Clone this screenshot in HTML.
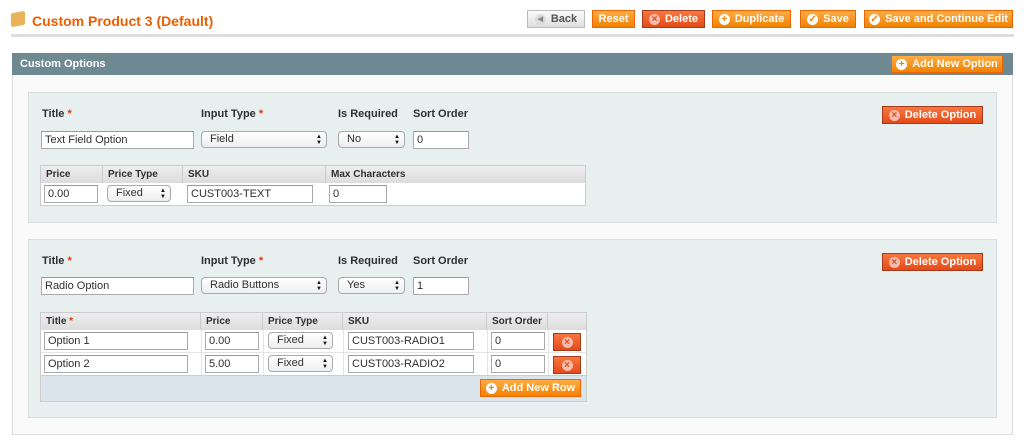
<!DOCTYPE html>
<html><head><style>
*{margin:0;padding:0;box-sizing:border-box}
body{width:1024px;height:445px;background:#fff;font-family:"Liberation Sans",Arial,sans-serif;font-size:11px;color:#2f2f2f;position:relative;overflow:hidden}
.a{position:absolute}
.btn{position:absolute;height:18px;border:1px solid #ed6502;background:linear-gradient(#ffac47,#f18200);color:#fff;font-weight:bold;font-size:11px;white-space:nowrap;display:flex;align-items:center;justify-content:center}
.red{border-color:#a43a1b;background:linear-gradient(#f8773f,#e44b19)}
.gray{border-color:#bbb;background:linear-gradient(#fbfbfb,#dedede);color:#555}
.ic{display:inline-block;width:11px;height:11px;border-radius:50%;background:#fff;margin-right:5px;color:#f18200;font-size:10px;line-height:11px;text-align:center;flex:none}
.red .ic{background:#f4bcae;color:#e44b19}
.lbl{position:absolute;font-weight:bold;font-size:11px;color:#2f2f2f}
.req{color:#eb340a}
.in{position:absolute;height:18px;border:1px solid #aaa;border-top-color:#999;background:#fff;font-size:11px;line-height:16px;padding-left:3px}
.sel{position:absolute;height:17px;border:1px solid #aaa;border-radius:4px;background:linear-gradient(#fff,#eee);font-size:11px;line-height:15px;padding-left:8px}
.sel:after{content:"\25B2\A\25BC";white-space:pre;position:absolute;right:4px;top:2px;font-size:6px;line-height:6px;color:#111}
.box{position:absolute;background:#e7efef;border:1px solid #d6e0e0}
.th{position:absolute;background:linear-gradient(#eee,#ddd);border-right:1px solid #ccc;font-weight:bold;font-size:10px;padding-left:5px;line-height:17px;height:17px}
</style></head><body>
<div class="a" style="left:11px;top:12px;width:14px;height:14px;background:#e9b35a;border-radius:2px;transform:skewY(-10deg)"></div>
<div class="a" style="left:32px;top:13px;font-size:14px;font-weight:bold;color:#eb5e00">Custom Product 3 (Default)</div>
<div class="a" style="left:11px;top:34px;width:1003px;height:3px;background:#ddd"></div>

<div class="btn gray" style="left:527px;top:10px;width:58px"><span class="ic" style="background:#ddd;color:#888;font-size:7px">&#9664;</span>Back</div>
<div class="btn" style="left:592px;top:10px;width:43px">Reset</div>
<div class="btn red" style="left:642px;top:10px;width:63px"><span class="ic">×</span>Delete</div>
<div class="btn" style="left:712px;top:10px;width:79px"><span class="ic">+</span>Duplicate</div>
<div class="btn" style="left:800px;top:10px;width:56px"><span class="ic">✓</span>Save</div>
<div class="btn" style="left:864px;top:10px;width:149px"><span class="ic">✓</span>Save and Continue Edit</div>

<div class="a" style="left:12px;top:53px;width:1001px;height:382px;background:#fafafa;border:1px solid #ddd"></div>
<div class="a" style="left:12px;top:53px;width:1001px;height:22px;background:#6f8992;color:#fff;font-weight:bold;font-size:11px;padding:5px 0 0 8px">Custom Options</div>
<div class="btn" style="left:891px;top:55px;width:112px"><span class="ic">+</span>Add New Option</div>

<div class="box" style="left:28px;top:92px;width:969px;height:131px"></div>
<div class="lbl" style="left:42px;top:108px">Title <span class="req">*</span></div>
<div class="lbl" style="left:201px;top:108px">Input Type <span class="req">*</span></div>
<div class="lbl" style="left:338px;top:108px">Is Required</div>
<div class="lbl" style="left:413px;top:108px">Sort Order</div>
<div class="in" style="left:41px;top:131px;width:153px">Text Field Option</div>
<div class="sel" style="left:201px;top:131px;width:126px">Field</div>
<div class="sel" style="left:338px;top:131px;width:67px">No</div>
<div class="in" style="left:413px;top:131px;width:56px">0</div>
<div class="btn red" style="left:882px;top:106px;width:101px"><span class="ic">×</span>Delete Option</div>
<div class="a" style="left:40px;top:165px;width:546px;height:41px;border:1px solid #ccc;background:#fff"></div>
<div class="th" style="left:41px;top:166px;width:62px">Price</div>
<div class="th" style="left:103px;top:166px;width:80px">Price Type</div>
<div class="th" style="left:183px;top:166px;width:143px">SKU</div>
<div class="th" style="left:326px;top:166px;width:259px;border:0">Max Characters</div>
<div class="in" style="left:44px;top:185px;width:54px">0.00</div>
<div class="sel" style="left:107px;top:185px;width:64px">Fixed</div>
<div class="in" style="left:187px;top:185px;width:126px">CUST003-TEXT</div>
<div class="in" style="left:329px;top:185px;width:58px">0</div>

<div class="box" style="left:28px;top:239px;width:969px;height:179px"></div>
<div class="lbl" style="left:42px;top:255px">Title <span class="req">*</span></div>
<div class="lbl" style="left:201px;top:255px">Input Type <span class="req">*</span></div>
<div class="lbl" style="left:338px;top:255px">Is Required</div>
<div class="lbl" style="left:413px;top:255px">Sort Order</div>
<div class="in" style="left:41px;top:277px;width:153px">Radio Option</div>
<div class="sel" style="left:201px;top:277px;width:126px">Radio Buttons</div>
<div class="sel" style="left:338px;top:277px;width:67px">Yes</div>
<div class="in" style="left:413px;top:277px;width:56px">1</div>
<div class="btn red" style="left:882px;top:253px;width:101px"><span class="ic">×</span>Delete Option</div>

<div class="a" style="left:40px;top:312px;width:547px;height:90px;border:1px solid #ccc;background:#dae4ea"></div>
<div class="th" style="left:41px;top:313px;width:160px">Title <span class="req">*</span></div>
<div class="th" style="left:201px;top:313px;width:62px">Price</div>
<div class="th" style="left:263px;top:313px;width:80px">Price Type</div>
<div class="th" style="left:343px;top:313px;width:144px">SKU</div>
<div class="th" style="left:487px;top:313px;width:61px">Sort Order</div>
<div class="th" style="left:548px;top:313px;width:38px;border:0"></div>
<div class="a" style="left:41px;top:330px;width:545px;height:45px;background:#fff"></div>
<div class="a" style="left:41px;top:352px;width:545px;height:1px;background:#e4e4e4"></div>
<div class="a" style="left:41px;top:375px;width:545px;height:1px;background:#ccc"></div>
<div class="a" style="left:201px;top:330px;width:1px;height:45px;background:#e4e4e4"></div>
<div class="a" style="left:263px;top:330px;width:1px;height:45px;background:#e4e4e4"></div>
<div class="a" style="left:343px;top:330px;width:1px;height:45px;background:#e4e4e4"></div>
<div class="a" style="left:487px;top:330px;width:1px;height:45px;background:#e4e4e4"></div>
<div class="a" style="left:548px;top:330px;width:1px;height:45px;background:#e4e4e4"></div>

<div class="in" style="left:44px;top:332px;width:144px">Option 1</div>
<div class="in" style="left:205px;top:332px;width:54px">0.00</div>
<div class="sel" style="left:268px;top:332px;width:65px">Fixed</div>
<div class="in" style="left:348px;top:332px;width:126px">CUST003-RADIO1</div>
<div class="in" style="left:491px;top:332px;width:54px">0</div>
<div class="btn red" style="left:553px;top:333px;width:28px"><span class="ic" style="margin:0">×</span></div>
<div class="in" style="left:44px;top:355px;width:144px">Option 2</div>
<div class="in" style="left:205px;top:355px;width:54px">5.00</div>
<div class="sel" style="left:268px;top:355px;width:65px">Fixed</div>
<div class="in" style="left:348px;top:355px;width:126px">CUST003-RADIO2</div>
<div class="in" style="left:491px;top:355px;width:54px">0</div>
<div class="btn red" style="left:553px;top:356px;width:28px"><span class="ic" style="margin:0">×</span></div>
<div class="btn" style="left:480px;top:379px;width:101px"><span class="ic">+</span>Add New Row</div>
</body></html>
